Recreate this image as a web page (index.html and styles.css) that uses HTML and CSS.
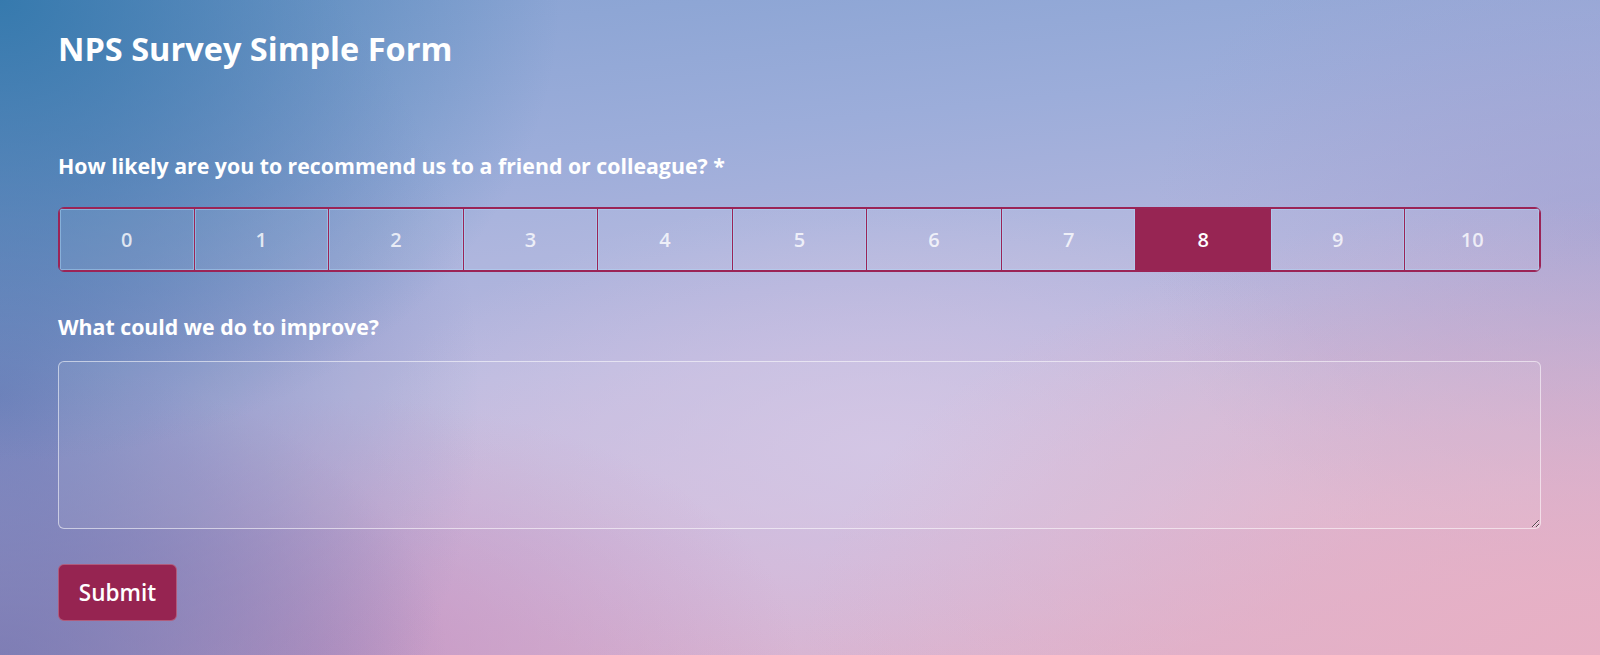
FILE: index.html
```html
<!DOCTYPE html>
<html lang="en">
<head>
<meta charset="utf-8">
<title>NPS Survey Simple Form</title>
<link rel="stylesheet" href="styles.css">
</head>
<body>
<main class="container">
  <h1 class="title">NPS Survey Simple Form</h1>
  <form class="form">
    <div class="field field-score">
      <label class="label">How likely are you to recommend us to a friend or colleague? *</label>
      <div class="score-group">
        <button type="button" class="score">0</button>
        <button type="button" class="score">1</button>
        <button type="button" class="score">2</button>
        <button type="button" class="score">3</button>
        <button type="button" class="score">4</button>
        <button type="button" class="score">5</button>
        <button type="button" class="score">6</button>
        <button type="button" class="score">7</button>
        <button type="button" class="score is-active">8</button>
        <button type="button" class="score">9</button>
        <button type="button" class="score">10</button>
      </div>
    </div>
    <div class="field field-text">
      <label class="label" for="improve">What could we do to improve?</label>
      <textarea id="improve" class="textarea"></textarea>
    </div>
    <button type="submit" class="submit">Submit</button>
  </form>
</main>
</body>
</html>
```

FILE: styles.css
```css
html, body {
  margin: 0;
  padding: 0;
}

body {
  min-height: 100vh;
  font-family: "Open Sans", "Noto Sans", sans-serif;
  color: #fff;
  background:
    radial-gradient(ellipse 35% 70% at 0% 0%, rgba(50, 120, 172, 0.95), rgba(50, 120, 172, 0) 100%),
    radial-gradient(ellipse 30% 85% at 0% 60%, rgba(108, 124, 184, 0.85), rgba(108, 124, 184, 0) 100%),
    radial-gradient(ellipse 28% 45% at 0% 100%, rgba(138, 124, 176, 0.95), rgba(138, 124, 176, 0) 100%),
    radial-gradient(ellipse 30% 40% at 20% 100%, rgba(192, 142, 192, 0.75), rgba(192, 142, 192, 0) 100%),
    radial-gradient(ellipse 50% 70% at 100% 100%, rgba(232, 176, 196, 1), rgba(232, 176, 196, 0) 100%),
    radial-gradient(ellipse 28% 55% at 100% 35%, rgba(160, 158, 208, 0.6), rgba(160, 158, 208, 0) 100%),
    radial-gradient(ellipse 32% 38% at 55% 68%, rgba(210, 196, 228, 0.85), rgba(210, 196, 228, 0) 100%),
    linear-gradient(174deg, #86a2d2 0%, #9cadda 25%, #bab8de 52%, #d4b6d6 78%, #deb0ca 100%);
}

.container {
  padding: 29px 59px 40px 58px;
}

.title {
  margin: 0;
  font-size: 32.5px;
  line-height: 1.2;
  font-weight: 700;
}

.form {
  display: flex;
  flex-direction: column;
  align-items: flex-start;
}

.field {
  display: flex;
  flex-direction: column;
  align-self: stretch;
}

.field-score {
  margin-top: 85px;
  gap: 28px;
}

.field-text {
  margin-top: 42px;
  gap: 22px;
}

.label {
  font-size: 21.3px;
  line-height: 1.2;
  font-weight: 700;
}

.score-group {
  display: flex;
  border: 1px solid #9b2456;
  border-radius: 6px;
  overflow: hidden;
}

.score {
  flex: 1 1 0;
  height: 63px;
  margin: 0 0 0 -1px;
  padding: 0;
  border: 1px solid #9b2456;
  background: rgba(255, 255, 255, 0.06);
  box-shadow: inset 0 0 0 1px rgba(175, 220, 250, 0.45);
  color: rgba(255, 255, 255, 0.78);
  font-family: inherit;
  font-size: 20px;
  font-weight: 600;
}

.score:first-child {
  margin-left: 0;
}

.score.is-active {
  background: #972553;
  color: #fff;
  box-shadow: none;
}

.textarea {
  box-sizing: border-box;
  height: 168px;
  width: 100%;
  border: 1px solid rgba(255, 255, 255, 0.55);
  border-radius: 6px;
  background: rgba(255, 255, 255, 0.07);
  font-family: inherit;
  font-size: 18px;
  color: #fff;
}

.submit {
  margin-top: 35px;
  width: 119px;
  height: 57px;
  padding: 0;
  border: 1px solid rgba(255, 255, 255, 0.25);
  border-radius: 6px;
  background: #962451;
  color: #fff;
  font-family: inherit;
  font-size: 22.5px;
  font-weight: 600;
}
```
